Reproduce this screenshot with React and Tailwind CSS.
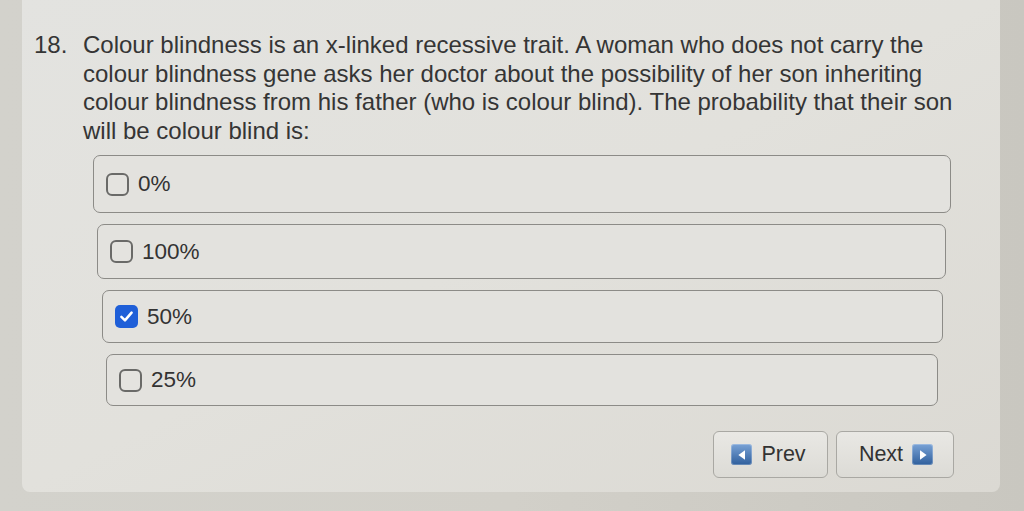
import React, { useState } from 'react'

const OPTIONS = [
  { id: 'a', label: '0%', row: 'ml-[71px] mr-[49px] h-[58px]' },
  { id: 'b', label: '100%', row: 'ml-[75px] mr-[54px] h-[55px]' },
  { id: 'c', label: '50%', row: 'ml-[80px] mr-[57px] h-[53px]' },
  { id: 'd', label: '25%', row: 'ml-[84px] mr-[62px] h-[52px]' },
]

// Rounded-square checkbox, blue with a white tick when selected
function Box({ checked }) {
  if (checked) {
    return (
      <span className="flex h-[23px] w-[23px] flex-shrink-0 items-center justify-center rounded-[5px] bg-[#1f5fd8]">
        <svg viewBox="0 0 20 20" className="h-[17px] w-[17px]">
          <path d="M4 10.5 L8.2 14.5 L16 5.5" fill="none" stroke="#fff" strokeWidth="3" strokeLinecap="round" strokeLinejoin="round" />
        </svg>
      </span>
    )
  }
  return <span className="h-[23px] w-[23px] flex-shrink-0 rounded-[6px] border-[2.5px] border-[#6a6a68] bg-[#e4e3df]" />
}

// Small blue bevelled arrow tile used on the nav buttons
function ArrowTile({ dir }) {
  return (
    <span className="flex h-[21px] w-[21px] items-center justify-center rounded-[3px] bg-gradient-to-b from-[#7aa3d6] to-[#2f5f9c] shadow-[inset_0_0_0_1px_rgba(255,255,255,0.25)]">
      <svg viewBox="0 0 10 10" className="h-[12px] w-[12px]">
        {dir === 'left' ? <path d="M7.5 1 L2 5 L7.5 9 Z" fill="#fff" /> : <path d="M2.5 1 L8 5 L2.5 9 Z" fill="#fff" />}
      </svg>
    </span>
  )
}

function NavButton({ children, className = '' }) {
  return (
    <button
      className={`flex h-[47px] items-center justify-center gap-[9px] rounded-[6px] border border-[#a9a8a3] bg-gradient-to-b from-[#e9e8e4] to-[#dcdbd6] text-[21.5px] text-[#333] ${className}`}
    >
      {children}
    </button>
  )
}

export default function App() {
  const [picked, setPicked] = useState('c')

  return (
    <div
      className="h-[511px] w-[1024px] overflow-hidden bg-gradient-to-r from-[#d3d2cc] via-[#d2d0c9] to-[#c9c7c0] pb-[19px] pl-[22px] pr-[24px]"
      style={{ fontFamily: '"Liberation Sans", Arial, sans-serif' }}
    >
      <div className="h-full rounded-b-[8px] bg-gradient-to-br from-[#e3e3e0] via-[#e2e1dc] to-[#dbd9d3] pt-[31px] text-[#353535]">
        <div className="flex pl-[12px] text-[24px] leading-[28.5px]">
          <span className="w-[49px] flex-shrink-0">18.</span>
          <p className="whitespace-nowrap">
            Colour blindness is an x-linked recessive trait. A woman who does not carry the
            <br />
            colour blindness gene asks her doctor about the possibility of her son inheriting
            <br />
            colour blindness from his father (who is colour blind). The probability that their son
            <br />
            will be colour blind is:
          </p>
        </div>

        <div className="mt-[10px] flex flex-col gap-[11px]">
          {OPTIONS.map((o) => (
            <label
              key={o.id}
              onClick={() => setPicked(o.id)}
              className={`flex items-center gap-[9px] rounded-[7px] border-[1.5px] border-[#8c8b87] bg-[#e3e2de] pl-[12px] text-[22.5px] text-[#333] ${o.row}`}
            >
              <Box checked={picked === o.id} />
              <span>{o.label}</span>
            </label>
          ))}
        </div>

        <div className="mr-[46px] mt-[25px] flex justify-end gap-[8px]">
          <NavButton className="w-[115px] pr-[4px]">
            <ArrowTile dir="left" />
            <span>Prev</span>
          </NavButton>
          <NavButton className="w-[118px] pl-[2px]">
            <span>Next</span>
            <ArrowTile dir="right" />
          </NavButton>
        </div>
      </div>
    </div>
  )
}
